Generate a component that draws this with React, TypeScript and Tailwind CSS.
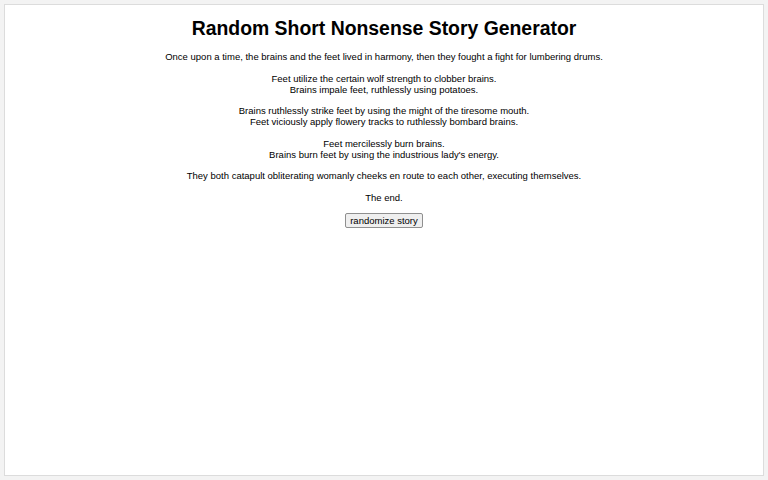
import { useState } from "react";

const story = {
  intro:
    "Once upon a time, the brains and the feet lived in harmony, then they fought a fight for lumbering drums.",
  rounds: [
    [
      "Feet utilize the certain wolf strength to clobber brains.",
      "Brains impale feet, ruthlessly using potatoes.",
    ],
    [
      "Brains ruthlessly strike feet by using the might of the tiresome mouth.",
      "Feet viciously apply flowery tracks to ruthlessly bombard brains.",
    ],
    ["Feet mercilessly burn brains.", "Brains burn feet by using the industrious lady's energy."],
  ],
  ending:
    "They both catapult obliterating womanly cheeks en route to each other, executing themselves.",
};

export default function App() {
  const [seed, setSeed] = useState(0);

  return (
    <div className="h-[480px] w-[768px] bg-[#f3f3f3] p-[4px] font-['Liberation_Sans',Arial,sans-serif] text-black">
      <div className="flex h-full flex-col items-center border border-[#dcdcdc] bg-white text-center" data-seed={seed}>
        <h1 className="mt-[12px] text-[19.4px] font-bold leading-[23px]">
          Random Short Nonsense Story Generator
        </h1>
        <div className="mt-[12px] text-[9.5px] leading-[10.85px]">
          <p>{story.intro}</p>
          {story.rounds.map((r, i) => (
            <p key={i} className="mt-[10.85px]">
              {r[0]}
              <br />
              {r[1]}
            </p>
          ))}
          <p className="mt-[10.85px]">{story.ending}</p>
          <p className="mt-[10.85px]">The end.</p>
        </div>
        <button
          onClick={() => setSeed(seed + 1)}
          className="mt-[9px] h-[15px] border border-[#8f8f8f] bg-[#efefef] px-[4px] text-[9.5px] leading-[11px] rounded-[2px]"
        >
          randomize story
        </button>
      </div>
    </div>
  );
}
